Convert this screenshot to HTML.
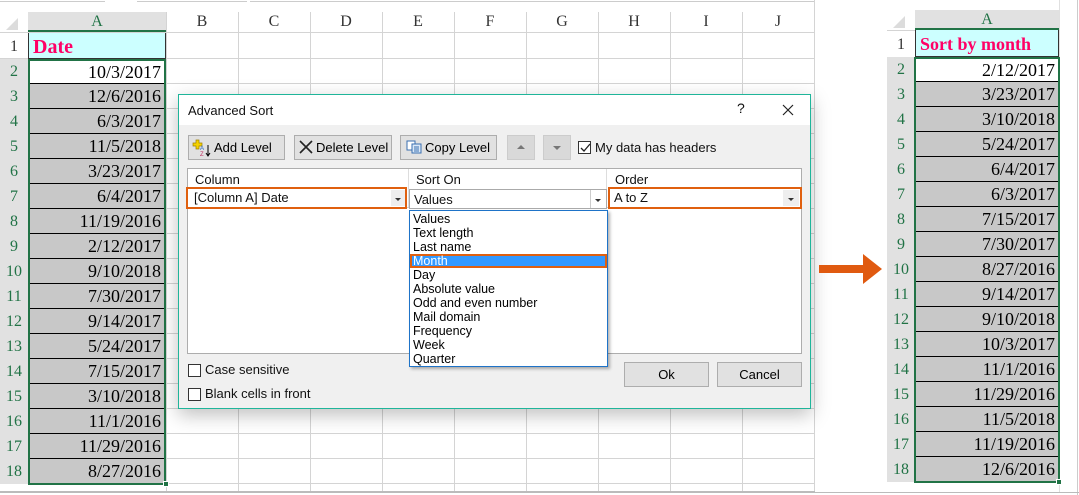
<!DOCTYPE html>
<html><head><meta charset="utf-8"><style>
*{box-sizing:border-box;margin:0;padding:0}
body{width:1079px;height:495px;overflow:hidden;background:#fff;position:relative;font-family:"Liberation Sans",sans-serif}
.a{position:absolute}
.hl{position:absolute;height:1px;background:#d4d4d4}
.vl{position:absolute;width:1px;background:#d4d4d4}
.ch{position:absolute;top:12px;height:20px;font:16px "Liberation Serif",serif;color:#333;text-align:center;line-height:20px}
.rn{position:absolute;width:28px;font:16px "Liberation Serif",serif;color:#217346;text-align:center;background:#e6e6e6}
.dc{position:absolute;background:#c8c8c8;border-bottom:1px solid #000;font:18px "Liberation Serif",serif;text-align:right;padding-right:3px;color:#000}
.dlg{font-family:"Liberation Sans",sans-serif;font-size:13px;color:#111}
.btn{position:absolute;background:#e1e1e1;border:1px solid #adadad;font:13px "Liberation Sans",sans-serif;line-height:23px}
.cb{position:absolute;width:13px;height:13px;border:1px solid #333;background:#fff}
.li{height:14px;line-height:14px;padding-left:3px;font:12.5px "Liberation Sans",sans-serif}
</style></head><body>
<div class="a" style="left:0;top:1px;width:105px;height:1px;background:#ccc"></div>
<div class="a" style="left:137px;top:1px;width:110px;height:1px;background:#ccc"></div>
<div class="a" style="left:250px;top:1px;width:565px;height:1px;background:#ccc"></div>

<div class="a" style="left:6px;top:18px;width:0;height:0;border-left:12px solid transparent;border-bottom:12px solid #dcdcdc"></div>
<div class="a" style="left:28px;top:12px;width:138px;height:20px;background:#e1e1e1;border-bottom:2px solid #217346"></div>
<div class="ch" style="left:28px;width:138px;color:#217346">A</div>
<div class="ch" style="left:166px;width:72px">B</div><div class="ch" style="left:238px;width:72px">C</div><div class="ch" style="left:310px;width:72px">D</div><div class="ch" style="left:382px;width:72px">E</div><div class="ch" style="left:454px;width:72px">F</div><div class="ch" style="left:526px;width:72px">G</div><div class="ch" style="left:598px;width:72px">H</div><div class="ch" style="left:670px;width:72px">I</div><div class="ch" style="left:742px;width:72px">J</div>
<div class="vl" style="left:238px;top:12px;height:480px"></div><div class="vl" style="left:310px;top:12px;height:480px"></div><div class="vl" style="left:382px;top:12px;height:480px"></div><div class="vl" style="left:454px;top:12px;height:480px"></div><div class="vl" style="left:526px;top:12px;height:480px"></div><div class="vl" style="left:598px;top:12px;height:480px"></div><div class="vl" style="left:670px;top:12px;height:480px"></div><div class="vl" style="left:742px;top:12px;height:480px"></div><div class="vl" style="left:814px;top:0;height:492px"></div><div class="vl" style="left:166px;top:12px;height:480px"></div>
<div class="hl" style="left:0;top:32px;width:815px"></div>
<div class="hl" style="left:0;top:58px;width:815px"></div>
<div class="hl" style="left:0;top:83px;width:815px"></div><div class="hl" style="left:0;top:108px;width:815px"></div><div class="hl" style="left:0;top:133px;width:815px"></div><div class="hl" style="left:0;top:158px;width:815px"></div><div class="hl" style="left:0;top:183px;width:815px"></div><div class="hl" style="left:0;top:208px;width:815px"></div><div class="hl" style="left:0;top:233px;width:815px"></div><div class="hl" style="left:0;top:258px;width:815px"></div><div class="hl" style="left:0;top:283px;width:815px"></div><div class="hl" style="left:0;top:308px;width:815px"></div><div class="hl" style="left:0;top:333px;width:815px"></div><div class="hl" style="left:0;top:358px;width:815px"></div><div class="hl" style="left:0;top:383px;width:815px"></div><div class="hl" style="left:0;top:408px;width:815px"></div><div class="hl" style="left:0;top:433px;width:815px"></div><div class="hl" style="left:0;top:458px;width:815px"></div><div class="hl" style="left:0;top:483px;width:815px"></div>
<div class="a" style="left:0;top:491px;width:815px;height:2px;background:#bbb"></div>
<div class="rn" style="left:0;top:33px;height:25px;line-height:27px;background:#fff;color:#333">1</div>
<div class="a" style="left:0;top:59px;width:28px;height:425px;background:#e1e1e1"></div>
<div class="rn" style="left:0;top:59px;height:24px;line-height:25px;background:none">2</div><div class="rn" style="left:0;top:84px;height:24px;line-height:25px;background:none">3</div><div class="rn" style="left:0;top:109px;height:24px;line-height:25px;background:none">4</div><div class="rn" style="left:0;top:134px;height:24px;line-height:25px;background:none">5</div><div class="rn" style="left:0;top:159px;height:24px;line-height:25px;background:none">6</div><div class="rn" style="left:0;top:184px;height:24px;line-height:25px;background:none">7</div><div class="rn" style="left:0;top:209px;height:24px;line-height:25px;background:none">8</div><div class="rn" style="left:0;top:234px;height:24px;line-height:25px;background:none">9</div><div class="rn" style="left:0;top:259px;height:24px;line-height:25px;background:none">10</div><div class="rn" style="left:0;top:284px;height:24px;line-height:25px;background:none">11</div><div class="rn" style="left:0;top:309px;height:24px;line-height:25px;background:none">12</div><div class="rn" style="left:0;top:334px;height:24px;line-height:25px;background:none">13</div><div class="rn" style="left:0;top:359px;height:24px;line-height:25px;background:none">14</div><div class="rn" style="left:0;top:384px;height:24px;line-height:25px;background:none">15</div><div class="rn" style="left:0;top:409px;height:24px;line-height:25px;background:none">16</div><div class="rn" style="left:0;top:434px;height:24px;line-height:25px;background:none">17</div><div class="rn" style="left:0;top:459px;height:24px;line-height:25px;background:none">18</div>
<div class="a" style="left:28px;top:33px;width:138px;height:26px;background:#ccffff;border:1px solid #333;border-top:none;font:bold 20px 'Liberation Serif',serif;color:#ff0066;padding-left:4px;line-height:28px">Date</div>
<div class="a" style="left:28px;top:59px;width:138px;height:426px;border:2px solid #217346;background:#fff"></div>
<div class="dc" style="left:30px;top:61px;width:134px;height:23px;background:#fff;line-height:23px">10/3/2017</div>
<div class="dc" style="left:30px;top:84px;width:134px;height:25px;line-height:25px">12/6/2016</div>
<div class="dc" style="left:30px;top:109px;width:134px;height:25px;line-height:25px">6/3/2017</div>
<div class="dc" style="left:30px;top:134px;width:134px;height:25px;line-height:25px">11/5/2018</div>
<div class="dc" style="left:30px;top:159px;width:134px;height:25px;line-height:25px">3/23/2017</div>
<div class="dc" style="left:30px;top:184px;width:134px;height:25px;line-height:25px">6/4/2017</div>
<div class="dc" style="left:30px;top:209px;width:134px;height:25px;line-height:25px">11/19/2016</div>
<div class="dc" style="left:30px;top:234px;width:134px;height:25px;line-height:25px">2/12/2017</div>
<div class="dc" style="left:30px;top:259px;width:134px;height:25px;line-height:25px">9/10/2018</div>
<div class="dc" style="left:30px;top:284px;width:134px;height:25px;line-height:25px">7/30/2017</div>
<div class="dc" style="left:30px;top:309px;width:134px;height:25px;line-height:25px">9/14/2017</div>
<div class="dc" style="left:30px;top:334px;width:134px;height:25px;line-height:25px">5/24/2017</div>
<div class="dc" style="left:30px;top:359px;width:134px;height:25px;line-height:25px">7/15/2017</div>
<div class="dc" style="left:30px;top:384px;width:134px;height:25px;line-height:25px">3/10/2018</div>
<div class="dc" style="left:30px;top:409px;width:134px;height:25px;line-height:25px">11/1/2016</div>
<div class="dc" style="left:30px;top:434px;width:134px;height:25px;line-height:25px">11/29/2016</div>
<div class="dc" style="left:30px;top:459px;width:134px;height:24px;line-height:24px;border-bottom:none">8/27/2016</div>
<div class="a" style="left:163px;top:481px;width:6px;height:6px;background:#217346;border:1px solid #fff"></div>

<div class="a dlg" style="left:178px;top:94px;width:633px;height:315px;border:1px solid #1fb59a;background:#f0f0f0;box-shadow:0 6px 18px rgba(0,0,0,.25)">
 <div class="a" style="left:0;top:0;width:631px;height:30px;background:#fff"></div>
 <div class="a" style="left:9px;top:8px;font-size:13px">Advanced Sort</div>
 <div class="a" style="left:558px;top:5px;font-size:14px">?</div>
 <svg class="a" style="left:603px;top:9px" width="12" height="12"><path d="M1 1L11 11M11 1L1 11" stroke="#222" stroke-width="1.2"/></svg>
</div>
<div class="btn" style="left:188px;top:135px;width:97px;height:25px;padding-left:25px">Add Level</div>
<svg class="a" style="left:192px;top:139px" width="20" height="18"><path d="M4 1h3v3h3v3H7v3H4V7H1V4h3z" fill="#f5d200" stroke="#a08000" stroke-width=".7"/><text x="8" y="11" font-size="6" fill="#2a6ac0" font-family="Liberation Sans">A</text><text x="8" y="17" font-size="6" fill="#c03060" font-family="Liberation Sans">Z</text><path d="M16 6v10M14 14l2 3 2-3" stroke="#000" fill="none"/></svg>
<div class="btn" style="left:294px;top:135px;width:98px;height:25px;padding-left:21px">Delete Level</div>
<svg class="a" style="left:299px;top:140px" width="14" height="14"><path d="M1 1L13 13M13 1L1 13" stroke="#222" stroke-width="1.6"/></svg>
<div class="btn" style="left:400px;top:135px;width:97px;height:25px;padding-left:24px">Copy Level</div>
<svg class="a" style="left:406px;top:140px" width="16" height="14"><rect x="1" y="1" width="8" height="9" fill="#fff" stroke="#3a6fb0"/><rect x="6" y="4" width="9" height="9" fill="#dbe8f7" stroke="#3a6fb0"/><path d="M8 7h5M8 9h5M8 11h5" stroke="#3a6fb0"/></svg>
<div class="btn" style="left:507px;top:135px;width:28px;height:25px;background:#d9d9d9;border-color:#ccc"></div>
<div class="a" style="left:517px;top:145px;border-left:4px solid transparent;border-right:4px solid transparent;border-bottom:4px solid #777"></div>
<div class="btn" style="left:543px;top:135px;width:28px;height:25px;background:#d9d9d9;border-color:#ccc"></div>
<div class="a" style="left:553px;top:146px;border-left:4px solid transparent;border-right:4px solid transparent;border-top:4px solid #777"></div>
<div class="cb" style="left:578px;top:141px"></div>
<svg class="a" style="left:579px;top:142px" width="12" height="12"><path d="M2 6l3 3 6-7" stroke="#222" fill="none" stroke-width="1.3"/></svg>
<div class="a dlg" style="left:595px;top:140px">My data has headers</div>

<div class="a" style="left:187px;top:168px;width:615px;height:186px;background:#fff;border:1px solid #adadad"></div>
<div class="a" style="left:408px;top:169px;width:1px;height:38px;background:#ddd"></div>
<div class="a" style="left:606px;top:169px;width:1px;height:38px;background:#ddd"></div>
<div class="a dlg" style="left:195px;top:172px">Column</div>
<div class="a dlg" style="left:416px;top:172px">Sort On</div>
<div class="a dlg" style="left:615px;top:172px">Order</div>
<div class="a" style="left:187px;top:207px;width:615px;height:1px;background:#ccc"></div>
<div class="a dlg" style="left:186px;top:187px;width:221px;height:22px;border:2px solid #e0600f;background:#fff;padding-left:6px;line-height:18px">[Column A] Date</div>
<div class="a" style="left:391px;top:190px;width:14px;height:16px;background:#eee"></div>
<div class="a" style="left:395px;top:198px;border-left:3px solid transparent;border-right:3px solid transparent;border-top:3px solid #333"></div>
<div class="a dlg" style="left:409px;top:189px;width:198px;height:20px;border:1px solid #aaa;background:#fff;padding-left:4px;line-height:19px">Values</div>
<div class="a" style="left:590px;top:190px;width:16px;height:18px;background:#fff;border-left:1px solid #ccc"></div>
<div class="a" style="left:595px;top:199px;border-left:3px solid transparent;border-right:3px solid transparent;border-top:3px solid #333"></div>
<div class="a dlg" style="left:608px;top:187px;width:194px;height:22px;border:2px solid #e0600f;background:#fff;padding-left:4px;line-height:18px">A to Z</div>
<div class="a" style="left:783px;top:190px;width:16px;height:16px;background:#eee"></div>
<div class="a" style="left:788px;top:198px;border-left:3px solid transparent;border-right:3px solid transparent;border-top:3px solid #333"></div>

<div class="a" style="left:409px;top:210px;width:199px;height:157px;border:1px solid #1e73c8;background:#fff;box-shadow:2px 2px 3px rgba(0,0,0,.3);padding-top:1px">
<div class="li">Values</div><div class="li">Text length</div><div class="li">Last name</div>
<div class="li" style="background:#3399ff;color:#fff;border:2px solid #e0600f;line-height:10px;padding-left:1px">Month</div>
<div class="li">Day</div><div class="li">Absolute value</div><div class="li">Odd and even number</div><div class="li">Mail domain</div><div class="li">Frequency</div><div class="li">Week</div><div class="li">Quarter</div>
</div>

<div class="cb" style="left:188px;top:364px"></div><div class="a dlg" style="left:205px;top:362px">Case sensitive</div>
<div class="cb" style="left:188px;top:388px"></div><div class="a dlg" style="left:205px;top:386px">Blank cells in front</div>
<div class="btn" style="left:624px;top:362px;width:85px;height:25px;text-align:center">Ok</div>
<div class="btn" style="left:717px;top:362px;width:85px;height:25px;text-align:center">Cancel</div>

<svg class="a" style="left:818px;top:252px" width="66" height="34"><path d="M1 13h44V2l19 15-19 15V21H1z" fill="#e05a10"/></svg>

<div class="vl" style="left:1059px;top:0;height:492px;background:#e0e0e0"></div>
<div class="vl" style="left:1077px;top:0;height:495px;background:#ccc"></div>
<div class="a" style="left:893px;top:16px;width:0;height:0;border-left:12px solid transparent;border-bottom:12px solid #dcdcdc"></div>
<div class="a" style="left:915px;top:10px;width:144px;height:20px;background:#e1e1e1;border-bottom:2px solid #217346"></div>
<div class="ch" style="left:915px;top:10px;width:144px;color:#217346">A</div>
<div class="hl" style="left:887px;top:30px;width:28px"></div>
<div class="rn" style="left:887px;top:31px;height:26px;line-height:28px;background:#fff;color:#333">1</div>
<div class="a" style="left:915px;top:30px;width:144px;height:27px;background:#ccffff;border:1px solid #333;border-top:none;font:bold 18px 'Liberation Serif',serif;color:#ff0066;padding-left:4px;line-height:29px">Sort by month</div>
<div class="a" style="left:887px;top:57px;width:28px;height:425px;background:#e1e1e1"></div>
<div class="rn" style="left:887px;top:57px;height:24px;line-height:25px;background:none">2</div><div class="rn" style="left:887px;top:82px;height:24px;line-height:25px;background:none">3</div><div class="rn" style="left:887px;top:107px;height:24px;line-height:25px;background:none">4</div><div class="rn" style="left:887px;top:132px;height:24px;line-height:25px;background:none">5</div><div class="rn" style="left:887px;top:157px;height:24px;line-height:25px;background:none">6</div><div class="rn" style="left:887px;top:182px;height:24px;line-height:25px;background:none">7</div><div class="rn" style="left:887px;top:207px;height:24px;line-height:25px;background:none">8</div><div class="rn" style="left:887px;top:232px;height:24px;line-height:25px;background:none">9</div><div class="rn" style="left:887px;top:257px;height:24px;line-height:25px;background:none">10</div><div class="rn" style="left:887px;top:282px;height:24px;line-height:25px;background:none">11</div><div class="rn" style="left:887px;top:307px;height:24px;line-height:25px;background:none">12</div><div class="rn" style="left:887px;top:332px;height:24px;line-height:25px;background:none">13</div><div class="rn" style="left:887px;top:357px;height:24px;line-height:25px;background:none">14</div><div class="rn" style="left:887px;top:382px;height:24px;line-height:25px;background:none">15</div><div class="rn" style="left:887px;top:407px;height:24px;line-height:25px;background:none">16</div><div class="rn" style="left:887px;top:432px;height:24px;line-height:25px;background:none">17</div><div class="rn" style="left:887px;top:457px;height:24px;line-height:25px;background:none">18</div>
<div class="a" style="left:914px;top:57px;width:146px;height:426px;border:2px solid #217346;background:#fff"></div>
<div class="dc" style="left:916px;top:59px;width:142px;height:23px;background:#fff;line-height:23px">2/12/2017</div>
<div class="dc" style="left:916px;top:82px;width:142px;height:25px;line-height:25px">3/23/2017</div>
<div class="dc" style="left:916px;top:107px;width:142px;height:25px;line-height:25px">3/10/2018</div>
<div class="dc" style="left:916px;top:132px;width:142px;height:25px;line-height:25px">5/24/2017</div>
<div class="dc" style="left:916px;top:157px;width:142px;height:25px;line-height:25px">6/4/2017</div>
<div class="dc" style="left:916px;top:182px;width:142px;height:25px;line-height:25px">6/3/2017</div>
<div class="dc" style="left:916px;top:207px;width:142px;height:25px;line-height:25px">7/15/2017</div>
<div class="dc" style="left:916px;top:232px;width:142px;height:25px;line-height:25px">7/30/2017</div>
<div class="dc" style="left:916px;top:257px;width:142px;height:25px;line-height:25px">8/27/2016</div>
<div class="dc" style="left:916px;top:282px;width:142px;height:25px;line-height:25px">9/14/2017</div>
<div class="dc" style="left:916px;top:307px;width:142px;height:25px;line-height:25px">9/10/2018</div>
<div class="dc" style="left:916px;top:332px;width:142px;height:25px;line-height:25px">10/3/2017</div>
<div class="dc" style="left:916px;top:357px;width:142px;height:25px;line-height:25px">11/1/2016</div>
<div class="dc" style="left:916px;top:382px;width:142px;height:25px;line-height:25px">11/29/2016</div>
<div class="dc" style="left:916px;top:407px;width:142px;height:25px;line-height:25px">11/5/2018</div>
<div class="dc" style="left:916px;top:432px;width:142px;height:25px;line-height:25px">11/19/2016</div>
<div class="dc" style="left:916px;top:457px;width:142px;height:24px;line-height:24px;border-bottom:none">12/6/2016</div>
<div class="a" style="left:1056px;top:479px;width:6px;height:6px;background:#217346;border:1px solid #fff"></div>
<div class="a" style="left:800px;top:492px;width:279px;height:1px;background:#bbb"></div>
</body></html>
